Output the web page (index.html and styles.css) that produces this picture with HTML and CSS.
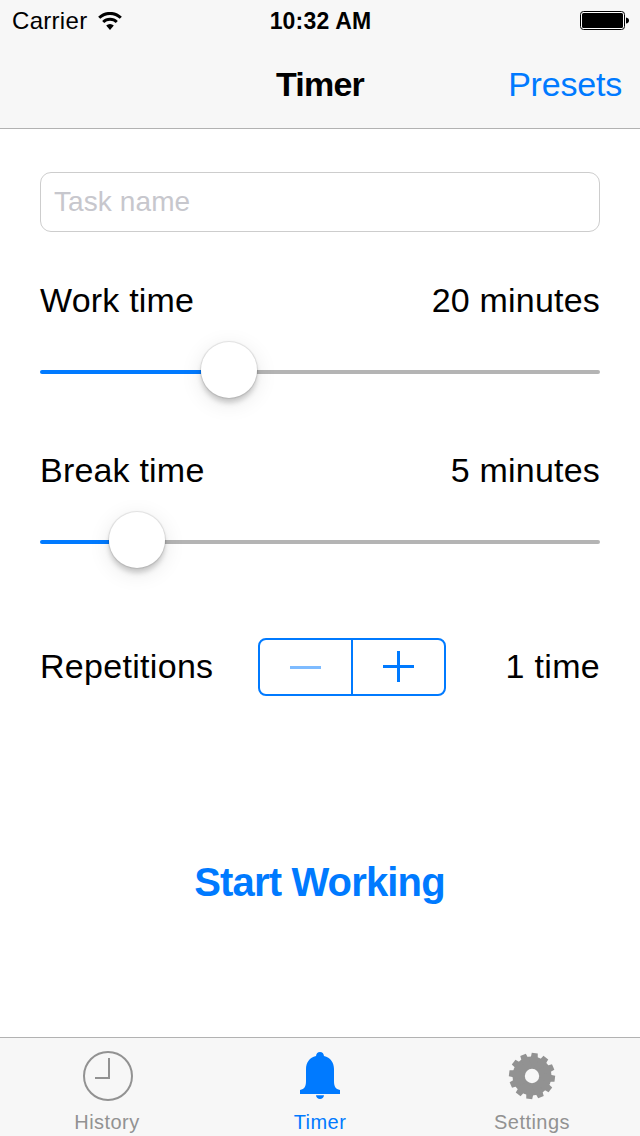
FILE: index.html
```
<!DOCTYPE html>
<html lang="en">
<head>
  <meta charset="UTF-8">
  <meta name="viewport" content="width=device-width, initial-scale=1.0">
  <title>Timer</title>
  <link rel="stylesheet" href="styles.css">
</head>
<body>
  <header>
    <div class="status-bar">
      <div class="carrier">
        <span>Carrier</span>
        <svg class="wifi" width="24" height="18" viewBox="0 0 24 18">
          <path d="M1.2 5.8 A15.4 15.4 0 0 1 22.8 5.8" fill="none" stroke="#000" stroke-width="3"/>
          <path d="M5.2 10 A9.6 9.6 0 0 1 18.8 10" fill="none" stroke="#000" stroke-width="2.9"/>
          <path d="M8.2 13.6 A5.5 5.5 0 0 1 15.8 13.6 L12 18 Z"/>
        </svg>
      </div>
      <span class="clock">10:32 AM</span>
      <svg class="battery" width="49" height="19" viewBox="0 0 49 19">
        <rect x="0.5" y="0.5" width="44" height="18" rx="3" fill="#fff" stroke="#000"/>
        <rect x="2" y="2" width="41" height="15" rx="1.5"/>
        <path d="M46 6.5 Q49 7 49 9.5 Q49 12 46 12.5 Z"/>
      </svg>
    </div>
    <div class="nav-bar">
      <h1>Timer</h1>
      <a class="presets">Presets</a>
    </div>
  </header>

  <main>
    <input class="task-name" type="text" placeholder="Task name">

    <div class="row">
      <span>Work time</span>
      <span>20 minutes</span>
    </div>
    <div class="slider">
      <div class="fill work"></div>
      <div class="thumb"></div>
      <div class="rest"></div>
    </div>

    <div class="row">
      <span>Break time</span>
      <span>5 minutes</span>
    </div>
    <div class="slider">
      <div class="fill break"></div>
      <div class="thumb"></div>
      <div class="rest"></div>
    </div>

    <div class="repetitions">
      <span>Repetitions</span>
      <div class="stepper">
        <button class="minus" disabled>
          <svg width="31" height="31" viewBox="0 0 31 31"><path d="M0 14h31v3H0z"/></svg>
        </button>
        <button class="plus">
          <svg width="31" height="31" viewBox="0 0 31 31"><path d="M0 14h31v3H0zM14 0h3v31h-3z"/></svg>
        </button>
      </div>
      <span class="times">1 time</span>
    </div>

    <button class="start">Start Working</button>
  </main>

  <nav class="tab-bar">
    <a class="tab">
      <svg width="52" height="52" viewBox="0 0 52 52" fill="none" stroke="#929292" stroke-width="2">
        <circle cx="26" cy="26" r="24"/>
        <path d="M27 8v20H13"/>
      </svg>
      <span class="history">History</span>
    </a>
    <a class="tab active">
      <svg width="52" height="52" viewBox="0 0 52 52" fill="#007aff">
        <path d="M26 2 C28.4 2 29.6 3.6 30 6 C36.5 7.6 40 12.5 40 19 V31 C40 36.5 41.5 39 46 40 V44 H6 V40 C10.5 39 12 36.5 12 31 V19 C12 12.5 15.5 7.6 22 6 C22.4 3.6 23.6 2 26 2 Z"/>
        <path d="M22 45.2 H30 C29.6 47.8 28.2 49 26 49 C23.8 49 22.4 47.8 22 45.2 Z"/>
      </svg>
      <span>Timer</span>
    </a>
    <a class="tab">
      <svg width="52" height="52" viewBox="0 0 52 52" fill="#929292">
        <defs>
          <path id="teeth" d="M23 3 H29 L29.8 10 V42 L29 49 H23 L22.2 42 V10 Z"/>
        </defs>
        <circle cx="26" cy="26" r="19.5"/>
        <use href="#teeth" transform="rotate(7 26 26)"/>
        <use href="#teeth" transform="rotate(37 26 26)"/>
        <use href="#teeth" transform="rotate(67 26 26)"/>
        <use href="#teeth" transform="rotate(97 26 26)"/>
        <use href="#teeth" transform="rotate(127 26 26)"/>
        <use href="#teeth" transform="rotate(157 26 26)"/>
        <circle cx="26" cy="26" r="7.2" fill="#f7f7f7"/>
      </svg>
      <span>Settings</span>
    </a>
  </nav>
</body>
</html>
```
FILE: styles.css
```
* {
  box-sizing: border-box;
}

body {
  margin: 0;
  height: 1136px;
  display: flex;
  flex-direction: column;
  overflow: hidden;
  background: #fff;
  color: #000;
  font-family: "Liberation Sans", Arial, sans-serif;
  font-size: 34px;
}

header {
  height: 129px;
  background: #f7f7f7;
  border-bottom: 1px solid #b2b2b2;
}

.status-bar {
  height: 41px;
  padding: 0 11px 0 12px;
  display: grid;
  grid-template-columns: 1fr auto 1fr;
  align-items: center;
  font-size: 24px;
}

.carrier {
  display: flex;
  align-items: center;
  gap: 11px;
  letter-spacing: 0.3px;
}

.clock {
  padding-top: 1px;
  font-weight: bold;
  font-size: 23px;
  letter-spacing: 0.2px;
}

.battery {
  justify-self: end;
}

.nav-bar {
  height: 87px;
  padding-right: 18px;
  display: grid;
  grid-template-columns: 1fr auto 1fr;
  align-items: center;
}

h1 {
  grid-column: 2;
  margin: 0 -18px 0 0;
  font-size: 34px;
  letter-spacing: -0.8px;
}

.presets {
  justify-self: end;
  color: #007aff;
  letter-spacing: -0.2px;
}

main {
  flex: 1;
  padding: 43px 40px 0;
}

.task-name {
  display: block;
  width: 100%;
  height: 60px;
  padding: 0 13px;
  border: 1px solid #cdcdcd;
  border-radius: 11px;
  font: 28px "Liberation Sans", Arial, sans-serif;
  letter-spacing: 0.1px;
}

.task-name::placeholder {
  color: #c7c7cd;
}

.row {
  display: flex;
  justify-content: space-between;
  height: 40px;
  margin-top: 48px;
  line-height: 40px;
  letter-spacing: 0.2px;
}

.slider {
  display: flex;
  align-items: center;
  height: 60px;
  margin-top: 22px;
}

.fill {
  height: 4px;
  border-radius: 2px 0 0 2px;
  background: #007aff;
}

.work {
  width: 161px;
}

.break {
  width: 69px;
}

.thumb {
  width: 56px;
  height: 56px;
  margin-bottom: 4px;
  border-radius: 50%;
  background: #fff;
  box-shadow: 0 0 1px 1px rgba(0, 0, 0, 0.1), 0 5px 5px rgba(0, 0, 0, 0.17), 0 5px 22px rgba(0, 0, 0, 0.1);
  z-index: 1;
}

.rest {
  flex: 1;
  height: 4px;
  border-radius: 0 2px 2px 0;
  background: #b4b4b4;
}

.repetitions {
  display: grid;
  grid-template-columns: 218px 188px 1fr;
  height: 58px;
  margin-top: 66px;
  line-height: 56px;
  letter-spacing: 0.3px;
}

.times {
  text-align: right;
}

button {
  padding: 0;
  border: none;
  background: none;
  color: #007aff;
  font-family: inherit;
}

.stepper {
  display: flex;
  border: 2px solid #007aff;
  border-radius: 8px;
}

.stepper button {
  flex: 1;
  display: flex;
  align-items: center;
  justify-content: center;
}

.stepper svg {
  fill: #007aff;
}

.stepper .plus {
  padding-bottom: 2px;
  border-left: 2px solid #007aff;
}

.minus svg {
  opacity: 0.5;
}

.start {
  display: block;
  height: 60px;
  margin: 156px auto 0;
  padding-right: 1px;
  font-size: 40px;
  font-weight: bold;
  letter-spacing: -0.85px;
}

.tab-bar {
  display: grid;
  grid-template-columns: repeat(3, 212px);
  justify-content: center;
  height: 99px;
  padding-top: 12px;
  background: #f7f7f7;
  border-top: 1px solid #b2b2b2;
}

.tab {
  display: flex;
  flex-direction: column;
  align-items: center;
  color: #929292;
  font-size: 20px;
}

.tab span {
  margin-top: 8px;
  line-height: 24px;
  letter-spacing: 0.45px;
}

.tab .history {
  margin-right: 2px;
}

.active {
  color: #007aff;
}
```
